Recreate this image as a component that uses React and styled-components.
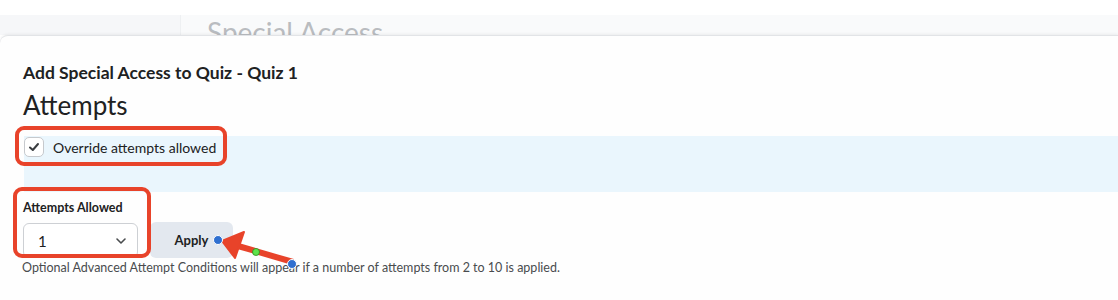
import styled, { createGlobalStyle } from 'styled-components';

const GlobalStyle = createGlobalStyle`
  body {
    margin: 0;
    background: #ffffff;
    font-family: Lato, "Liberation Sans", sans-serif;
    color: #202122;
  }
`;

const Page = styled.div`
  position: relative;
  width: 1118px;
  height: 300px;
  overflow: hidden;
  padding-top: 15px;
  box-sizing: border-box;
`;

const Backdrop = styled.div`
  display: flex;
  height: 20px;
  background: #f9fafb;
  overflow: hidden;
`;

const SideNav = styled.div`
  width: 180px;
  background: #f6f7f9;
  border-right: 1px solid #eef0f2;
`;

const PageTitle = styled.div`
  padding-left: 26px;
  font-size: 28px;
  line-height: 28px;
  margin-top: 3px;
  color: #b9bcc0;
`;

const Dialog = styled.div`
  position: relative;
  background: #fefefe;
  border-top: 1px solid #e2e4e7;
  border-top-left-radius: 8px;
  box-shadow: 0 -1px 3px rgba(0, 0, 0, 0.06);
  padding: 27px 0 30px 0;
  height: 270px;
  box-sizing: border-box;
`;

const Title = styled.div`
  padding-left: 23px;
  font-size: 17.5px;
  font-weight: 700;
  line-height: 20px;
`;

const Heading = styled.div`
  padding-left: 23px;
  margin-top: 7px;
  font-size: 26px;
  line-height: 30px;
`;

const Band = styled.div`
  margin: 16px 0 0 24px;
  height: 56px;
  background: #eaf6fd;
  padding-top: 1px;
  box-sizing: border-box;
`;

const Highlight = styled.div`
  position: relative;
  display: inline-flex;
  &::after {
    content: '';
    position: absolute;
    inset: ${({ $inset }) => $inset};
    border: 4px solid #e8432a;
    border-radius: 9px;
    pointer-events: none;
  }
`;

const CheckRow = styled.label`
  display: flex;
  align-items: center;
  gap: 9px;
  font-size: 14px;
  color: #202122;
`;

const Box = styled.span`
  width: 20px;
  height: 20px;
  border: 1px solid #c6c9cd;
  border-radius: 5px;
  box-sizing: border-box;
  background: #fff;
  display: flex;
  align-items: center;
  justify-content: center;
`;

const Field = styled.div`
  display: flex;
  align-items: flex-end;
  gap: 12px;
  padding-left: 23px;
  margin-top: 8px;
`;

const FieldLabel = styled.div`
  font-size: 12.5px;
  font-weight: 700;
  line-height: 16px;
  margin-bottom: 7px;
`;

const Select = styled.div`
  width: 115px;
  height: 35px;
  border: 1px solid #cdd0d4;
  border-radius: 6px;
  box-sizing: border-box;
  display: flex;
  align-items: center;
  justify-content: space-between;
  padding: 0 10px 0 14px;
  font-size: 15px;
  background: #fff;
`;

const Button = styled.div`
  width: 83px;
  height: 36px;
  border-radius: 6px;
  background: #e3e8ef;
  display: flex;
  align-items: center;
  justify-content: center;
  font-size: 13px;
  font-weight: 700;
  color: #202122;
`;

const Help = styled.div`
  padding-left: 22px;
  margin-top: 2px;
  font-size: 12.5px;
  line-height: 15px;
  color: #494c4e;
`;

const Overlay = styled.svg`
  position: absolute;
  left: 0;
  top: 0;
  pointer-events: none;
`;

const Check = () => (
  <svg width="12" height="12" viewBox="0 0 12 12">
    <path d="M2 6.5 L4.8 9 L10 3" fill="none" stroke="#3a3d40" strokeWidth="2" strokeLinecap="round" strokeLinejoin="round" />
  </svg>
);

const Chevron = () => (
  <svg width="12" height="8" viewBox="0 0 12 8">
    <path d="M2 2 L6 6 L10 2" fill="none" stroke="#494c4e" strokeWidth="1.6" strokeLinecap="round" strokeLinejoin="round" />
  </svg>
);

export default function App() {
  return (
    <>
      <GlobalStyle />
      <Page>
        <Backdrop>
          <SideNav />
          <PageTitle>Special Access</PageTitle>
        </Backdrop>
        <Dialog>
          <Title>Add Special Access to Quiz - Quiz 1</Title>
          <Heading>Attempts</Heading>
          <Band>
            <Highlight $inset="-11px -11px -9px -9px">
              <CheckRow>
                <Box><Check /></Box>
                Override attempts allowed
              </CheckRow>
            </Highlight>
          </Band>
          <Field>
            <Highlight $inset="-13px -13px 0px -10px">
              <div>
                <FieldLabel>Attempts Allowed</FieldLabel>
                <Select>1<Chevron /></Select>
              </div>
            </Highlight>
            <Button>Apply</Button>
          </Field>
          <Help>Optional Advanced Attempt Conditions will appear if a number of attempts from 2 to 10 is applied.</Help>
        </Dialog>
        <Overlay width="1118" height="300">
          <path d="M293 262 L238 246" stroke="#e8432a" strokeWidth="6" />
          <path d="M222 241 L244 232 L235 258 Z" fill="#e8432a" stroke="#e8432a" strokeWidth="2" strokeLinejoin="round" />
          <circle cx="218" cy="240" r="4.5" fill="#2f6fd0" stroke="#fff" strokeWidth="1" />
          <circle cx="256" cy="252" r="3.5" fill="#5ee34a" stroke="#2b8a1e" strokeWidth="0.8" />
          <circle cx="292" cy="264" r="4.5" fill="#2f6fd0" stroke="#fff" strokeWidth="1" />
        </Overlay>
      </Page>
    </>
  );
}
